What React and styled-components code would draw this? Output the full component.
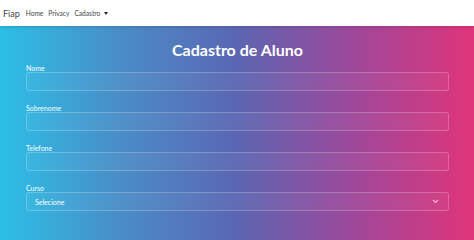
import React from "react";
import styled, { createGlobalStyle } from "styled-components";

const Global = createGlobalStyle`
  html, body { margin: 0; padding: 0; }
  body {
    font-family: Lato, "Open Sans", "Liberation Sans", sans-serif;
    width: 474px;
    height: 215px;
    overflow: hidden;
    background: linear-gradient(to right, #2bbfe6 0%, #4a8dc8 25%, #5b66b2 50%, #a0479a 75%, #e0347a 100%);
  }
`;

const Nav = styled.nav`
  height: 26px;
  background: #fff;
  box-shadow: 0 1px 3px rgba(0, 0, 0, 0.15);
  display: flex;
  align-items: center;
  padding-left: 3px;
  box-sizing: border-box;
`;

const Brand = styled.span`
  font-size: 9px;
  color: #444;
  margin-right: 6px;
`;

const NavLink = styled.span`
  font-size: 6.6px;
  color: #444;
  margin-right: 5px;
  display: flex;
  align-items: center;
`;

const Caret = styled.span`
  display: inline-block;
  margin-left: 4px;
  width: 0;
  height: 0;
  border-left: 2.5px solid transparent;
  border-right: 2.5px solid transparent;
  border-top: 3px solid #222;
`;

const Main = styled.main`
  padding: 12px 25px 0 26px;
  color: #fff;
`;

const Title = styled.h1`
  margin: 0;
  text-align: center;
  font-size: 16px;
  font-weight: 700;
  line-height: 24px;
  height: 26px;
`;

const Field = styled.div`
  display: flex;
  flex-direction: column;
  margin-bottom: 13px;
`;

const Label = styled.label`
  font-size: 7px;
  line-height: 8px;
  height: 8px;
  color: #fff;
`;

const Box = styled.div`
  height: 19px;
  box-sizing: border-box;
  border: 1px solid rgba(255, 255, 255, 0.22);
  border-radius: 3px;
  background: rgba(255, 255, 255, 0.04);
  display: flex;
  align-items: center;
  justify-content: space-between;
  padding: 0 9px 0 8px;
  font-size: 7px;
  color: #fff;
`;

const Chevron = () => (
  <svg width="7" height="5" viewBox="0 0 7 5" fill="none">
    <path d="M1 1 L3.5 3.5 L6 1" stroke="#f4b6d6" strokeWidth="1.1" />
  </svg>
);

export default function App() {
  return (
    <>
      <Global />
      <Nav>
        <Brand>Fiap</Brand>
        <NavLink>Home</NavLink>
        <NavLink>Privacy</NavLink>
        <NavLink>
          Cadastro <Caret />
        </NavLink>
      </Nav>
      <Main>
        <Title>Cadastro de Aluno</Title>
        <Field>
          <Label>Nome</Label>
          <Box />
        </Field>
        <Field>
          <Label>Sobrenome</Label>
          <Box />
        </Field>
        <Field>
          <Label>Telefone</Label>
          <Box />
        </Field>
        <Field>
          <Label>Curso</Label>
          <Box>
            <span>Selecione</span>
            <Chevron />
          </Box>
        </Field>
      </Main>
    </>
  );
}
